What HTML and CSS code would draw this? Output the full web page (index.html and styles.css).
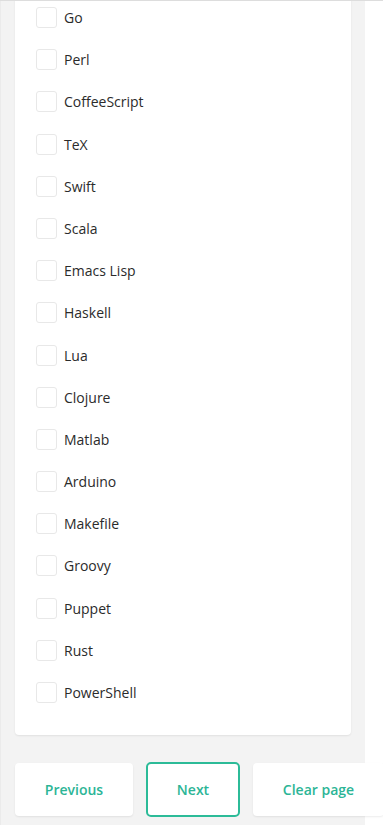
FILE: index.html
```html
<!DOCTYPE html>
<html lang="en">
<head>
<meta charset="utf-8">
<title>Languages</title>
<link rel="stylesheet" href="styles.css">
</head>
<body>
<div class="page">
  <div class="panel">
    <div class="card">
      <ul class="options">
        <li class="option"><span class="box"></span><span class="label">Go</span></li>
        <li class="option"><span class="box"></span><span class="label">Perl</span></li>
        <li class="option"><span class="box"></span><span class="label">CoffeeScript</span></li>
        <li class="option"><span class="box"></span><span class="label">TeX</span></li>
        <li class="option"><span class="box"></span><span class="label">Swift</span></li>
        <li class="option"><span class="box"></span><span class="label">Scala</span></li>
        <li class="option"><span class="box"></span><span class="label">Emacs Lisp</span></li>
        <li class="option"><span class="box"></span><span class="label">Haskell</span></li>
        <li class="option"><span class="box"></span><span class="label">Lua</span></li>
        <li class="option"><span class="box"></span><span class="label">Clojure</span></li>
        <li class="option"><span class="box"></span><span class="label">Matlab</span></li>
        <li class="option"><span class="box"></span><span class="label">Arduino</span></li>
        <li class="option"><span class="box"></span><span class="label">Makefile</span></li>
        <li class="option"><span class="box"></span><span class="label">Groovy</span></li>
        <li class="option"><span class="box"></span><span class="label">Puppet</span></li>
        <li class="option"><span class="box"></span><span class="label">Rust</span></li>
        <li class="option"><span class="box"></span><span class="label">PowerShell</span></li>
      </ul>
    </div>
    <div class="actions">
      <button class="btn btn-prev">Previous</button>
      <button class="btn btn-next">Next</button>
      <button class="btn btn-clear">Clear page</button>
    </div>
  </div>
</div>
</body>
</html>
```
FILE: styles.css
```css
html, body {
  margin: 0;
  padding: 0;
  background: #ffffff;
  font-family: "Open Sans", "Noto Sans", sans-serif;
  color: #2b2b2b;
}

.page {
  border-top: 1px solid #dddddd;
  height: 829px;
  overflow: hidden;
}

.panel {
  width: 350px;
  padding-left: 15px;
  background: #f3f3f3;
  height: 829px;
  box-shadow: inset 1px 0 0 #ebebeb;
}

.card {
  width: 336px;
  margin-top: -4.6px;
  background: #ffffff;
  border-radius: 0 0 4px 4px;
  box-shadow: 0 1px 2px rgba(0, 0, 0, 0.08);
  padding-bottom: 21.4px;
}

.options {
  list-style: none;
  margin: 0;
  padding: 0 0 0 21px;
}

.option {
  display: flex;
  align-items: center;
  gap: 7px;
  height: 42.19px;
  font-size: 14px;
}

.box {
  width: 19px;
  height: 19px;
  border: 1px solid #e8e8e8;
  border-radius: 3px;
  background: #ffffff;
  flex-shrink: 0;
}

.label {
  line-height: 20px;
  padding-top: 1px;
}

.actions {
  display: flex;
  align-items: center;
  margin-top: 27px;
  gap: 13px;
}

.btn {
  flex-shrink: 0;
  height: 53px;
  border: none;
  border-radius: 4px;
  background: #ffffff;
  box-shadow: 0 1px 2px rgba(0, 0, 0, 0.08);
  font-family: "Open Sans", "Noto Sans", sans-serif;
  font-size: 14px;
  font-weight: 600;
  color: #2cb596;
  padding: 0;
  cursor: pointer;
}

.btn-prev {
  width: 118px;
}

.btn-next {
  width: 94px;
  height: 55px;
  border: 2px solid #2cbb98;
  border-radius: 5px;
  box-shadow: none;
}

.btn-clear {
  width: 131px;
}
```
